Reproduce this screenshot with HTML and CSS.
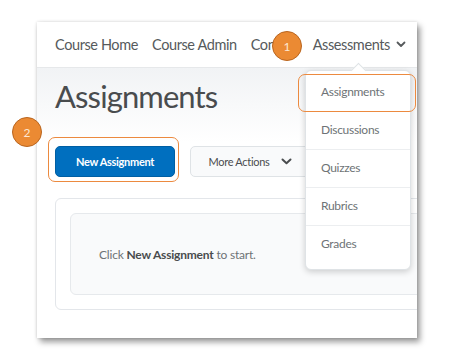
FILE: index.html
```html
<!DOCTYPE html>
<html lang="en">
<head>
    <meta charset="UTF-8">
    <title>Assignments</title>
    <link rel="stylesheet" href="styles.css">
</head>
<body>
    <div class="frame">
        <nav class="navbar">
            <span class="nav-item">Course Home</span>
            <span class="nav-item">Course Admin</span>
            <span class="nav-item">Content</span>
            <span class="nav-item nav-open">Assessments
                <svg class="chev" width="10" height="7" viewBox="0 0 10 7"><polyline points="1.5,1.5 5,5 8.5,1.5" fill="none" stroke="#565a5c" stroke-width="1.8" stroke-linecap="round" stroke-linejoin="round"/></svg>
            </span>
        </nav>

        <main class="page">
            <h1>Assignments</h1>

            <div class="actions">
                <button class="btn btn-primary marked">New Assignment</button>
                <button class="btn btn-secondary">More Actions
                    <svg class="chev" width="11" height="7" viewBox="0 0 11 7"><polyline points="1.5,1.5 5.5,5.2 9.5,1.5" fill="none" stroke="#494c4e" stroke-width="2" stroke-linecap="round" stroke-linejoin="round"/></svg>
                </button>
            </div>

            <div class="card">
                <div class="empty">
                    <p>Click <b>New Assignment</b> to start.</p>
                </div>
            </div>
        </main>

        <!-- Assessments menu -->
        <ul class="menu">
            <li class="marked">Assignments</li>
            <li>Discussions</li>
            <li>Quizzes</li>
            <li>Rubrics</li>
            <li>Grades</li>
        </ul>
    </div>

    <!-- step callouts -->
    <span class="step step-one">1</span>
    <span class="step step-two">2</span>
</body>
</html>
```

FILE: styles.css
```css
body {
    margin: 0;
    background-color: #fff;
    font-family: Lato, "Open Sans", sans-serif;
    width: 450px;
    height: 355px;
    position: relative;
    overflow: hidden;
}
.frame {
    position: relative;
    margin: 22px 0 0 37px;
    width: 380px;
    height: 316px;
    background-color: #fff;
    box-shadow: 3px 4px 6px rgba(0, 0, 0, 0.4), 0 0 3px rgba(0, 0, 0, 0.15);
    overflow: hidden;
}
.navbar {
    display: flex;
    align-items: center;
    gap: 14px;
    height: 45px;
    padding-left: 18px;
    border-bottom: 1px solid #e6e8ea;
    font-size: 14.5px;
    letter-spacing: -0.4px;
    color: #565a5c;
    white-space: nowrap;
}
.nav-open {
    display: flex;
    align-items: center;
    gap: 6px;
    margin-left: -1px;
}
.page {
    padding: 8px 0 0 18px;
    background: linear-gradient(#f1f3f5, #fff 75px);
    height: 300px;
}
h1 {
    margin: 0;
    font-size: 31px;
    line-height: 40px;
    font-weight: 400;
    letter-spacing: -0.9px;
    color: #494c4e;
}
.actions {
    display: flex;
    gap: 15px;
    margin-top: 30px;
}
.btn {
    width: 120px;
    height: 31px;
    border-radius: 5px;
    font-family: Lato, "Open Sans", sans-serif;
    font-size: 11px;
    letter-spacing: -0.3px;
    font-weight: 700;
    display: flex;
    align-items: center;
    justify-content: center;
    gap: 11px;
}
.btn-primary {
    position: relative;
    background-color: #006fbf;
    border: 1px solid #005fa3;
    color: #fff;
}
.btn-primary.marked::after {
    content: "";
    position: absolute;
    top: -10px;
    left: -8px;
    right: -5px;
    bottom: -6px;
    border: 1.5px solid #ec8a3f;
    border-radius: 7px;
}
.btn-secondary {
    background-color: #f9fafb;
    border: 1px solid #dfe3e6;
    color: #494c4e;
    font-weight: 400;
}
.card {
    width: 400px;
    margin-top: 21px;
    padding: 14px;
    border: 1px solid #e3e6ea;
    border-radius: 6px;
    background-color: #fff;
}
.empty {
    height: 80px;
    display: flex;
    align-items: center;
    padding-left: 28px;
    background-color: #f9fafb;
    border: 1px solid #e6e9ec;
    border-radius: 6px;
}
.empty p {
    margin: 0;
    font-size: 12px;
    letter-spacing: -0.2px;
    color: #6e7376;
}
.empty b {
    color: #494c4e;
}
.menu {
    position: absolute;
    top: 48px;
    left: 268px;
    width: 104px;
    margin: 0;
    padding: 3px 0 6px;
    list-style: none;
    background-color: #fff;
    border: 1px solid #dfe3e6;
    border-radius: 6px;
    box-shadow: 0 2px 6px rgba(0, 0, 0, 0.18);
}
.menu::before {
    content: "";
    position: absolute;
    top: -6px;
    left: 47px;
    width: 10px;
    height: 10px;
    background-color: #fff;
    border-left: 1px solid #dfe3e6;
    border-top: 1px solid #dfe3e6;
    transform: rotate(45deg);
}
.menu li {
    position: relative;
    height: 37px;
    line-height: 36px;
    padding-left: 15px;
    font-size: 12px;
    letter-spacing: -0.3px;
    color: #6e7376;
    border-bottom: 1px solid #eceef0;
}
.menu li:last-child {
    border-bottom: none;
}
.menu li.marked::after {
    content: "";
    position: absolute;
    top: 0;
    left: -8px;
    right: -6px;
    bottom: -1px;
    border: 1.5px solid #ec8a3f;
    border-radius: 7px;
}
.step {
    position: absolute;
    width: 28px;
    height: 28px;
    border-radius: 50%;
    background-color: #eb8a33;
    border: 1.5px solid #b9651f;
    color: #fde7d2;
    font-size: 12px;
    display: flex;
    align-items: center;
    justify-content: center;
}
.step-one {
    left: 272px;
    top: 31px;
}
.step-two {
    left: 12px;
    top: 117px;
}
```
